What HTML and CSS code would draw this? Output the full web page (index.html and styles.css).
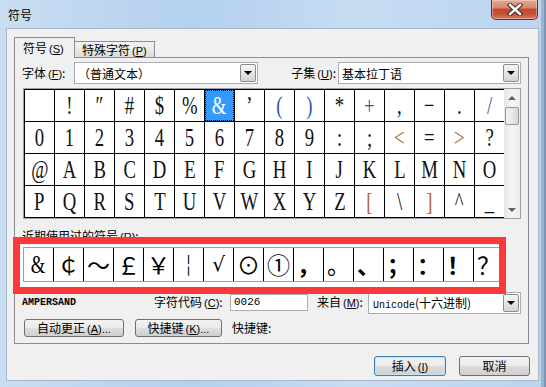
FILE: index.html
```html
<!DOCTYPE html>
<html lang="zh-CN">

<head>
    <meta charset="UTF-8">
    <meta name="viewport" content="width=device-width, initial-scale=1.0">
    <title>符号</title>
    <link rel="stylesheet" href="styles.css">
</head>

<body>

    <div class="window">
        <div class="titlebar">
            <span class="title">符号</span>
            <div class="close">
                <svg width="16" height="13" viewBox="0 0 16 13">
                    <path d="M3 2 L13 11 M13 2 L3 11" stroke="#4a2a24" stroke-width="4.5" stroke-linecap="square" />
                    <path d="M3 2 L13 11 M13 2 L3 11" stroke="#ffffff" stroke-width="2.4" stroke-linecap="square" />
                </svg>
            </div>
        </div>

        <div class="client">
            <div class="tabs">
                <div class="tab active">符号<span class="ak">(<u>S</u>)</span></div>
                <div class="tab">特殊字符<span class="ak">(<u>P</u>)</span></div>
            </div>

            <div class="panel">
                <div class="select-row">
                    <div class="field">
                        <span class="lbl lbl-font">字体<span class="ak">(<u>F</u>)</span>:</span>
                        <div class="combo combo-font">
                            <span>（普通文本）</span>
                            <span class="arrow"></span>
                        </div>
                    </div>
                    <div class="field">
                        <span class="lbl">子集<span class="ak">(<u>U</u>)</span>:</span>
                        <div class="combo combo-subset">
                            <span>基本拉丁语</span>
                            <span class="arrow"></span>
                        </div>
                    </div>
                </div>

                <div class="charmap">
                    <div class="grid">
                        <div class="cell"></div>
                        <div class="cell"><span>!</span></div>
                        <div class="cell"><span>″</span></div>
                        <div class="cell"><span>#</span></div>
                        <div class="cell"><span>$</span></div>
                        <div class="cell"><span>%</span></div>
                        <div class="cell selected"><span>&amp;</span></div>
                        <div class="cell"><span>’</span></div>
                        <div class="cell blue"><span>(</span></div>
                        <div class="cell blue"><span>)</span></div>
                        <div class="cell"><span>*</span></div>
                        <div class="cell blue"><span>+</span></div>
                        <div class="cell"><span>,</span></div>
                        <div class="cell"><span>−</span></div>
                        <div class="cell"><span>.</span></div>
                        <div class="cell blue"><span>/</span></div>

                        <div class="cell"><span>0</span></div>
                        <div class="cell"><span>1</span></div>
                        <div class="cell"><span>2</span></div>
                        <div class="cell"><span>3</span></div>
                        <div class="cell"><span>4</span></div>
                        <div class="cell"><span>5</span></div>
                        <div class="cell"><span>6</span></div>
                        <div class="cell"><span>7</span></div>
                        <div class="cell"><span>8</span></div>
                        <div class="cell"><span>9</span></div>
                        <div class="cell"><span>:</span></div>
                        <div class="cell"><span>;</span></div>
                        <div class="cell orange"><span>&lt;</span></div>
                        <div class="cell"><span>=</span></div>
                        <div class="cell orange"><span>&gt;</span></div>
                        <div class="cell"><span>?</span></div>

                        <div class="cell"><span>@</span></div>
                        <div class="cell"><span>A</span></div>
                        <div class="cell"><span>B</span></div>
                        <div class="cell"><span>C</span></div>
                        <div class="cell"><span>D</span></div>
                        <div class="cell"><span>E</span></div>
                        <div class="cell"><span>F</span></div>
                        <div class="cell"><span>G</span></div>
                        <div class="cell"><span>H</span></div>
                        <div class="cell"><span>I</span></div>
                        <div class="cell"><span>J</span></div>
                        <div class="cell"><span>K</span></div>
                        <div class="cell"><span>L</span></div>
                        <div class="cell"><span>M</span></div>
                        <div class="cell"><span>N</span></div>
                        <div class="cell"><span>O</span></div>

                        <div class="cell"><span>P</span></div>
                        <div class="cell"><span>Q</span></div>
                        <div class="cell"><span>R</span></div>
                        <div class="cell"><span>S</span></div>
                        <div class="cell"><span>T</span></div>
                        <div class="cell"><span>U</span></div>
                        <div class="cell"><span>V</span></div>
                        <div class="cell"><span>W</span></div>
                        <div class="cell"><span>X</span></div>
                        <div class="cell"><span>Y</span></div>
                        <div class="cell"><span>Z</span></div>
                        <div class="cell orange"><span>[</span></div>
                        <div class="cell"><span>\</span></div>
                        <div class="cell orange"><span>]</span></div>
                        <div class="cell"><span>^</span></div>
                        <div class="cell"><span>_</span></div>
                    </div>
                    <div class="scrollbar">
                        <div class="sb-btn"><span class="tri-up"></span></div>
                        <div class="sb-thumb"></div>
                        <div class="sb-track"></div>
                        <div class="sb-btn"><span class="tri-down"></span></div>
                    </div>
                </div>

                <div class="recent-label">近期使用过的符号<span class="ak">(<u>R</u>)</span>:</div>
                <div class="recent">
                    <div class="recent-grid">
                        <div class="rcell serif"><span>&amp;</span></div>
                        <div class="rcell"><span>￠</span></div>
                        <div class="rcell"><span>～</span></div>
                        <div class="rcell"><span>￡</span></div>
                        <div class="rcell"><span>￥</span></div>
                        <div class="rcell bold"><span>￤</span></div>
                        <div class="rcell root"><span>√</span></div>
                        <div class="rcell"><span>⊙</span></div>
                        <div class="rcell"><span>①</span></div>
                        <div class="rcell bold"><span>，</span></div>
                        <div class="rcell"><span>。</span></div>
                        <div class="rcell bold"><span>、</span></div>
                        <div class="rcell bold"><span>；</span></div>
                        <div class="rcell bold"><span>：</span></div>
                        <div class="rcell bold"><span>！</span></div>
                        <div class="rcell"><span>？</span></div>
                    </div>
                </div>

                <div class="info">
                    <span class="char-name">AMPERSAND</span>
                    <span class="lbl code-label">字符代码<span class="ak">(<u>C</u>)</span>:</span>
                    <div class="textbox">0026</div>
                    <span class="lbl from-label">来自<span class="ak">(<u>M</u>)</span>:</span>
                    <div class="combo combo-from">
                        <span><span class="mono">Unicode</span>(十六进制)</span>
                        <span class="arrow"></span>
                    </div>
                </div>

                <div class="btn-row">
                    <button class="btn btn-auto">自动更正<span class="ak">(<u>A</u>)...</span></button>
                    <button class="btn btn-key">快捷键<span class="ak">(<u>K</u>)...</span></button>
                    <span class="lbl shortcut">快捷键:</span>
                </div>

                <!-- red annotation frame drawn over the recent symbols -->
                <div class="highlight"></div>
            </div>

            <div class="footer">
                <button class="btn btn-insert">插入<span class="ak">(<u>I</u>)</span></button>
                <button class="btn btn-cancel">取消</button>
            </div>
        </div>
    </div>

</body>

</html>
```

FILE: styles.css
```css
body {
    margin: 0;
    font-family: "Noto Sans CJK SC", "Liberation Sans", sans-serif;
    font-size: 12px;
    color: #000;
}

.window {
    width: 546px;
    height: 387px;
    overflow: hidden;
    background: linear-gradient(90deg, #c9ddf2 0%, #b4d0ee 35%, #c6dcf3 65%, #bcd4ee 100%);
    box-shadow: inset -2px 0 0 #7d96b4, inset -5px 0 0 #9cb4ce;
}

/* title bar */

.titlebar {
    height: 29px;
    display: flex;
    justify-content: space-between;
    align-items: flex-start;
}

.title {
    padding: 8px 0 0 8px;
    line-height: 14px;
}

.close {
    width: 47px;
    height: 20px;
    margin-right: 8px;
    box-sizing: border-box;
    border: 1px solid #6f2a1f;
    border-top: none;
    border-radius: 0 0 5px 5px;
    background: linear-gradient(#e7a693 0%, #d98770 40%, #c24a2f 50%, #c6503a 75%, #de7b5e 100%);
    box-shadow: inset 0 0 0 1px rgba(255, 255, 255, 0.35);
    display: flex;
    align-items: center;
    justify-content: center;
}

/* dialog body */

.client {
    width: 531px;
    height: 351px;
    margin-left: 7px;
    box-sizing: border-box;
    padding-top: 8px;
    background-color: #f0f0f0;
    box-shadow: 0 0 0 1px #a8b8ca;
}

.tabs {
    display: flex;
    align-items: flex-end;
    padding-left: 7px;
    height: 21px;
}

.tab {
    box-sizing: border-box;
    height: 17px;
    padding: 0 6px;
    border: 1px solid #898c95;
    border-bottom: none;
    background: linear-gradient(#f3f3f3, #e7e7e7 50%, #dadada);
    line-height: 16px;
    white-space: nowrap;
}

.tab.active {
    position: relative;
    z-index: 1;
    height: 21px;
    width: 61px;
    padding: 0 0 0 8px;
    background: #f0f0f0;
    line-height: 20px;
}

.tab:not(.active) {
    width: 80px;
    padding-left: 7px;
    border-left: none;
}

.ak {
    font-family: "Liberation Sans", sans-serif;
    font-size: 11px;
    margin-left: 2px;
}

.panel {
    position: relative;
    box-sizing: border-box;
    width: 515px;
    height: 287px;
    margin: -1px 0 0 7px;
    padding: 4px 7px 0 7px;
    border: 1px solid #898c95;
}

.lbl {
    line-height: 14px;
    white-space: nowrap;
}

/* font / subset row */

.select-row {
    display: flex;
    justify-content: space-between;
    height: 22px;
}

.field {
    display: flex;
    align-items: center;
}

.lbl-font {
    width: 52px;
}

.field .lbl + .combo {
    margin-left: 2px;
}

.combo {
    box-sizing: border-box;
    height: 22px;
    display: flex;
    align-items: center;
    padding-left: 3px;
    background-color: #fff;
    border: 1px solid #abadb3;
    white-space: nowrap;
}

.combo-font {
    width: 184px;
    margin-left: 0 !important;
}

.combo-subset {
    width: 183px;
}

.arrow {
    margin-left: auto;
    margin-right: 1px;
    box-sizing: border-box;
    width: 16px;
    height: 18px;
    border: 1px solid #8d8d8d;
    border-radius: 2px;
    background: linear-gradient(#f4f4f4, #e5e5e5 50%, #d4d4d4);
    display: flex;
    align-items: center;
    justify-content: center;
}

.arrow::after {
    content: "";
    border-left: 4px solid transparent;
    border-right: 4px solid transparent;
    border-top: 4px solid #000;
}

/* character map */

.charmap {
    display: flex;
    width: max-content;
    margin: 4px 0 0 1px;
    border: 1px solid #a0a0a0;
}

.grid {
    display: grid;
    grid-template-columns: repeat(16, 29px);
    grid-auto-rows: 31px;
    gap: 1px;
    padding: 1px 0 1px 1px;
    background-color: #000;
}

.cell {
    background-color: #fff;
    display: flex;
    align-items: center;
    justify-content: center;
    font-family: "Liberation Serif", "DejaVu Serif", serif;
    font-size: 26px;
    line-height: 31px;
    color: #111;
}

.cell span {
    display: inline-block;
    transform: scaleX(0.72);
}

.cell.blue {
    color: #2a5aa6;
}

.cell.orange {
    color: #a8652a;
}

.cell.selected {
    box-sizing: border-box;
    background-color: #3399ff;
    border: 1px dotted #000;
    color: #fff;
}

.scrollbar {
    width: 16px;
    display: flex;
    flex-direction: column;
    background: linear-gradient(90deg, #e6e6e6, #f4f4f4 50%, #ececec);
}

.sb-btn {
    height: 17px;
    display: flex;
    align-items: center;
    justify-content: center;
}

.tri-up {
    border-left: 4px solid transparent;
    border-right: 4px solid transparent;
    border-bottom: 4px solid #606060;
}

.tri-down {
    border-left: 4px solid transparent;
    border-right: 4px solid transparent;
    border-top: 4px solid #606060;
}

.sb-thumb {
    height: 16px;
    margin: 1px 1px 0 1px;
    border: 1px solid #979797;
    border-radius: 2px;
    background: linear-gradient(90deg, #f3f3f3, #e8e8e8 50%, #d8d8d8);
}

.sb-track {
    flex: 1;
}

/* recently used */

.recent-label {
    margin-top: 10px;
    line-height: 14px;
}

.recent {
    width: max-content;
    margin: 1px 0 0 -3px;
    padding: 2px 2px 5px 4px;
    background-color: #fff;
}

.recent-grid {
    display: grid;
    grid-template-columns: repeat(16, 29px);
    grid-auto-rows: 33px;
    gap: 1px;
    background-color: #000;
    border: 1px solid #a0a0a0;
}

.rcell {
    background-color: #fff;
    display: flex;
    align-items: center;
    justify-content: center;
    font-size: 23px;
    line-height: 33px;
    overflow: hidden;
}

.rcell.bold {
    font-weight: bold;
}

.rcell.root {
    font-family: "DejaVu Sans", sans-serif;
    font-size: 20px;
}

.rcell.serif {
    font-family: "Liberation Serif", serif;
    font-size: 26px;
}

.rcell.serif span {
    display: inline-block;
    transform: scaleX(0.72);
}

.highlight {
    position: absolute;
    left: -2px;
    top: 179px;
    width: 493px;
    height: 57px;
    box-sizing: border-box;
    border: 7px solid #fa3a3a;
}

/* details */

.info {
    display: flex;
    align-items: center;
    height: 17px;
    margin-top: 7px;
}

.char-name {
    width: 132px;
    font-family: "Liberation Mono", monospace;
    font-size: 10px;
    font-weight: bold;
}

.code-label {
    width: 76px;
}

.textbox {
    box-sizing: border-box;
    width: 78px;
    height: 17px;
    padding-left: 3px;
    border: 1px solid #abadb3;
    background-color: #fff;
    font-family: "Liberation Mono", monospace;
    font-size: 11px;
    line-height: 15px;
}

.from-label {
    width: 51px;
    margin-left: 9px;
}

.combo-from {
    width: 153px;
    height: 22px;
    padding-left: 4px;
}

.mono {
    font-family: "Liberation Mono", monospace;
    font-size: 10px;
}

.btn-row {
    display: flex;
    align-items: center;
    margin-top: 8px;
}

.btn {
    box-sizing: border-box;
    height: 18px;
    padding: 0;
    border: 1px solid #707070;
    border-radius: 3px;
    background: linear-gradient(#f2f2f2 0%, #ebebeb 50%, #dddddd 51%, #cfcfcf 100%);
    font-family: inherit;
    font-size: 12px;
    line-height: 14px;
    color: #000;
}

.btn-auto {
    width: 100px;
    margin-left: 2px;
}

.btn-key {
    width: 87px;
    margin-left: 11px;
}

.shortcut {
    margin-left: 10px;
}

.footer {
    display: flex;
    justify-content: flex-end;
    gap: 13px;
    margin-top: 12px;
    padding-right: 8px;
}

.footer .btn {
    height: 20px;
}

.btn-insert {
    width: 72px;
    border-color: #3c7fb1;
    box-shadow: inset 0 0 0 1px #c4e5f6;
}

.btn-cancel {
    width: 71px;
}
```
